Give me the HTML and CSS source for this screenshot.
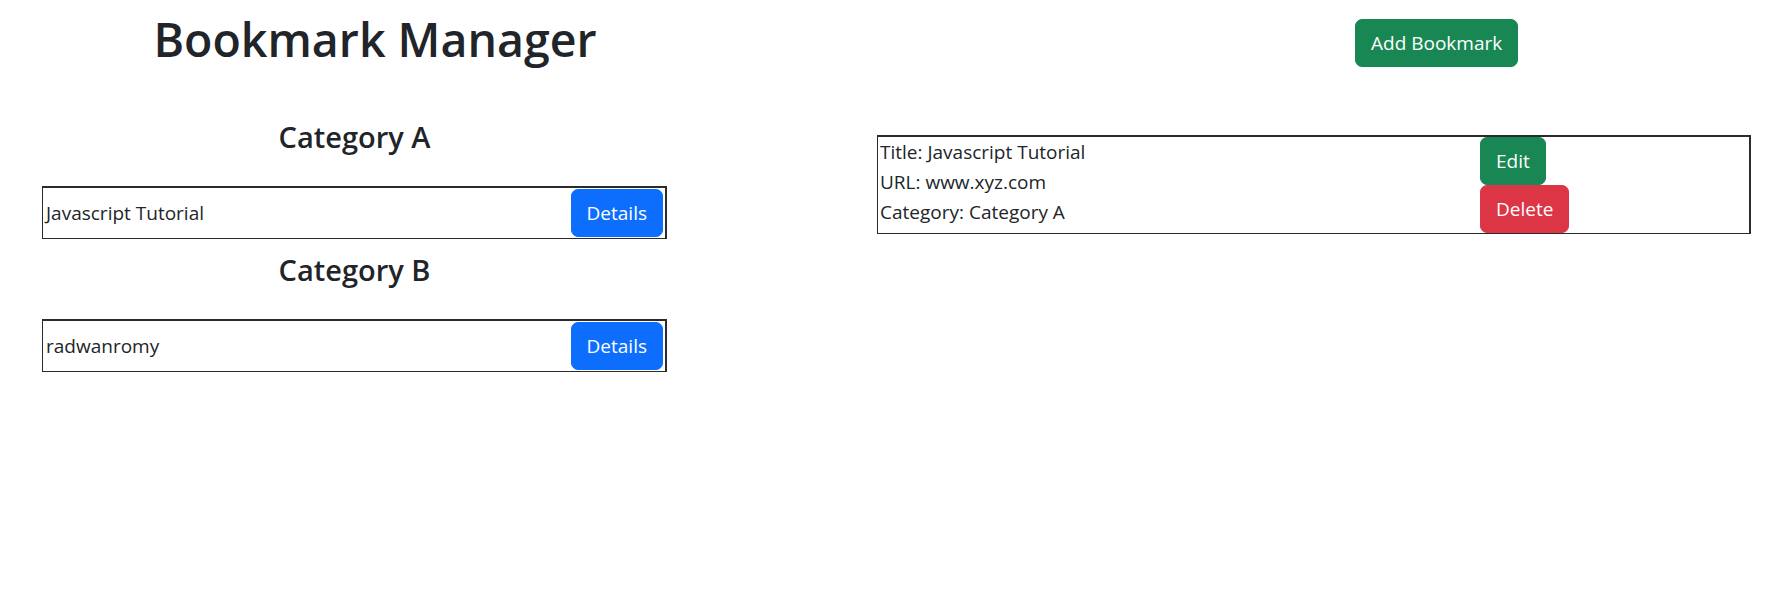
FILE: index.html
```html
<!DOCTYPE html>
<html lang="en">
<head>
<meta charset="utf-8">
<title>Bookmark Manager</title>
<link rel="stylesheet" href="styles.css">
</head>
<body>
<div class="page">
  <header class="top">
    <h1 class="title">Bookmark Manager</h1>
    <div class="actions">
      <button class="btn btn-green">Add Bookmark</button>
    </div>
  </header>
  <main class="content">
    <section class="categories">
      <div class="category">
        <h4 class="cat-title">Category A</h4>
        <div class="item">
          <span class="item-name">Javascript Tutorial</span>
          <button class="btn btn-blue">Details</button>
        </div>
      </div>
      <div class="category">
        <h4 class="cat-title">Category B</h4>
        <div class="item">
          <span class="item-name">radwanromy</span>
          <button class="btn btn-blue">Details</button>
        </div>
      </div>
    </section>
    <section class="detail">
      <div class="detail-box">
        <div class="detail-text">
          <div>Title: Javascript Tutorial</div>
          <div>URL: www.xyz.com</div>
          <div>Category: Category A</div>
        </div>
        <div class="detail-actions">
          <button class="btn btn-green btn-block">Edit</button>
          <button class="btn btn-red btn-block">Delete</button>
        </div>
      </div>
    </section>
  </main>
</div>
</body>
</html>
```

FILE: styles.css
```css
* { box-sizing: border-box; }

html, body {
  margin: 0;
  padding: 0;
  background: #fff;
}

body {
  font-family: "Open Sans", "Noto Sans", sans-serif;
  font-size: 19px;
  line-height: 30px;
  color: #212529;
}

.page {
  width: 1772px;
}

.top {
  display: flex;
  align-items: flex-start;
  height: 119px;
}

.title {
  margin: 9px 0 0 0;
  width: 750px;
  text-align: center;
  font-size: 46.5px;
  font-weight: 600;
  line-height: 60px;
}

.actions {
  margin: 19px 0 0 605px;
}

.btn {
  font-family: inherit;
  font-size: 19px;
  line-height: 30px;
  padding: 8px 15px;
  border: 1px solid transparent;
  border-radius: 7px;
  color: #fff;
  cursor: pointer;
}

.btn-green { background: #198754; border-color: #198754; }
.btn-blue { background: #0d6efd; border-color: #0d6efd; }
.btn-red { background: #dc3545; border-color: #dc3545; }

.btn-block { display: block; }

.content {
  display: flex;
  align-items: flex-start;
}

.categories {
  margin-left: 42px;
  width: 625px;
}

.cat-title {
  margin: 0 0 30.5px 0;
  text-align: center;
  font-size: 29px;
  font-weight: 600;
  line-height: 36px;
}

.item {
  display: flex;
  align-items: center;
  justify-content: space-between;
  border: 1px solid #2b2b2b;
  border-top-width: 2px;
  border-right-width: 2px;
  padding: 1px 2px 1px 2px;
  margin-bottom: 13.5px;
}

.item-name {
  padding-left: 1px;
}

.detail {
  margin-left: 210px;
  margin-top: 15.5px;
  width: 874px;
}

.detail-box {
  display: grid;
  grid-template-columns: 600px auto;
  border: 1px solid #2b2b2b;
  border-top-width: 2px;
  border-right-width: 2px;
  padding: 0 0 0 2px;
}

.detail-actions {
  display: flex;
  flex-direction: column;
  align-items: flex-start;
}
```
